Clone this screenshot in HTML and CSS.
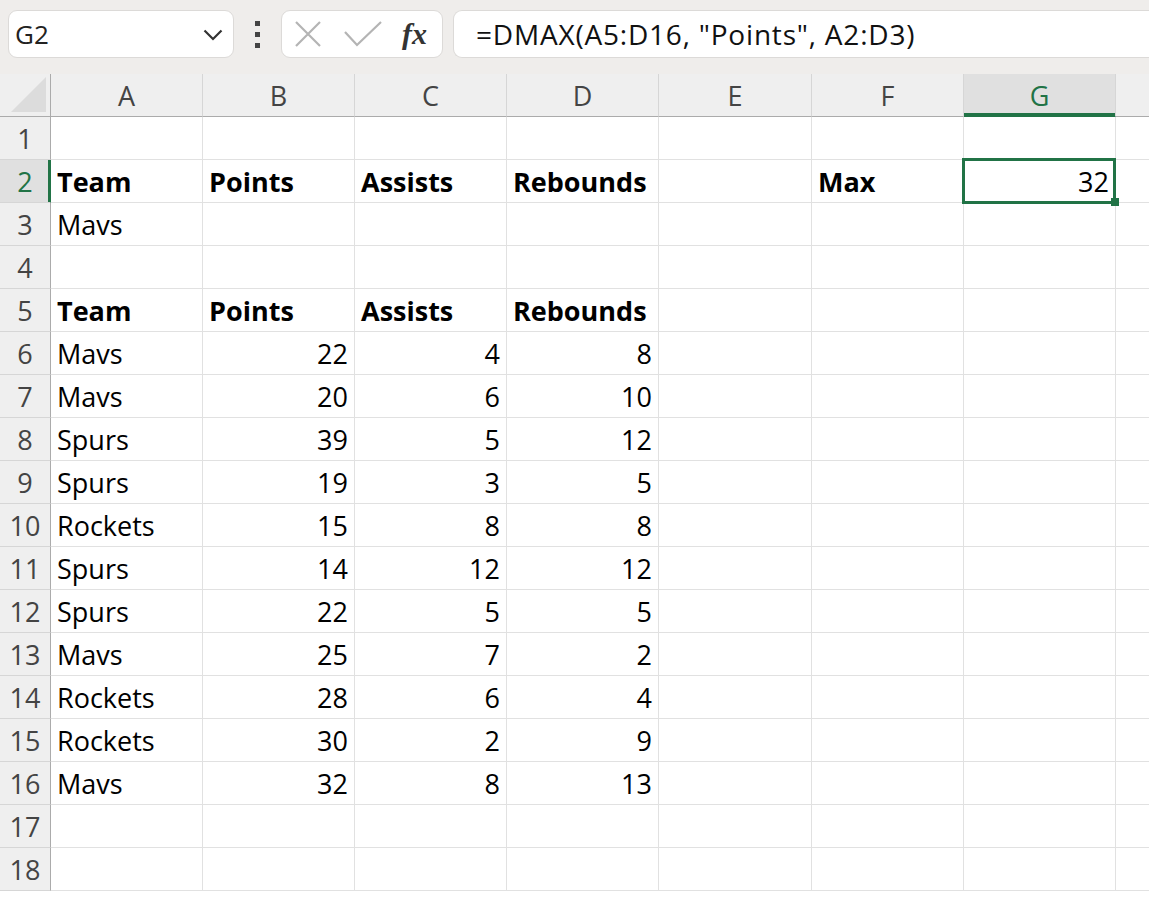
FILE: index.html
```html
<!DOCTYPE html>
<html lang="en">
<head>
  <meta charset="UTF-8" />
  <title>DMAX - Book1</title>
  <link rel="stylesheet" href="styles.css">
</head>
<body>
  <div class="toolbar">
    <div class="namebox">
      <span class="ref">G2</span>
      <svg class="chev" width="20" height="12" viewBox="0 0 20 12"><path d="M1.5 1.5 L10 10 L18.5 1.5" fill="none" stroke="#333" stroke-width="2.2"/></svg>
    </div>
    <div class="dots"><i></i><i></i><i></i></div>
    <div class="fxbox">
      <svg width="28" height="28" viewBox="0 0 28 28"><path d="M2 2 L26 26 M26 2 L2 26" stroke="#b4b4b4" stroke-width="2.2" fill="none"/></svg>
      <svg width="38" height="28" viewBox="0 0 38 28"><path d="M1 12 L13 25 L37 2" stroke="#b4b4b4" stroke-width="2.2" fill="none"/></svg>
      <span class="fx">fx</span>
    </div>
    <div class="formula">=DMAX(A5:D16, "Points", A2:D3)</div>
  </div>

  <table class="sheet">
    <thead>
      <tr>
        <th class="corner"><span class="tri"></span></th>
        <th>A</th><th>B</th><th>C</th><th>D</th><th class="wide">E</th><th>F</th><th class="sel">G</th><th class="rest"></th>
      </tr>
    </thead>
    <tbody>
      <tr><th>1</th><td></td><td></td><td></td><td></td><td></td><td></td><td></td><td></td></tr>
      <tr><th class="sel">2</th><td class="b">Team</td><td class="b">Points</td><td class="b">Assists</td><td class="b">Rebounds</td><td></td><td class="b">Max</td><td class="n active">32<span class="handle"></span></td><td></td></tr>
      <tr><th>3</th><td>Mavs</td><td></td><td></td><td></td><td></td><td></td><td></td><td></td></tr>
      <tr><th>4</th><td></td><td></td><td></td><td></td><td></td><td></td><td></td><td></td></tr>
      <tr><th>5</th><td class="b">Team</td><td class="b">Points</td><td class="b">Assists</td><td class="b">Rebounds</td><td></td><td></td><td></td><td></td></tr>
      <tr><th>6</th><td>Mavs</td><td class="n">22</td><td class="n">4</td><td class="n">8</td><td></td><td></td><td></td><td></td></tr>
      <tr><th>7</th><td>Mavs</td><td class="n">20</td><td class="n">6</td><td class="n">10</td><td></td><td></td><td></td><td></td></tr>
      <tr><th>8</th><td>Spurs</td><td class="n">39</td><td class="n">5</td><td class="n">12</td><td></td><td></td><td></td><td></td></tr>
      <tr><th>9</th><td>Spurs</td><td class="n">19</td><td class="n">3</td><td class="n">5</td><td></td><td></td><td></td><td></td></tr>
      <tr><th>10</th><td>Rockets</td><td class="n">15</td><td class="n">8</td><td class="n">8</td><td></td><td></td><td></td><td></td></tr>
      <tr><th>11</th><td>Spurs</td><td class="n">14</td><td class="n">12</td><td class="n">12</td><td></td><td></td><td></td><td></td></tr>
      <tr><th>12</th><td>Spurs</td><td class="n">22</td><td class="n">5</td><td class="n">5</td><td></td><td></td><td></td><td></td></tr>
      <tr><th>13</th><td>Mavs</td><td class="n">25</td><td class="n">7</td><td class="n">2</td><td></td><td></td><td></td><td></td></tr>
      <tr><th>14</th><td>Rockets</td><td class="n">28</td><td class="n">6</td><td class="n">4</td><td></td><td></td><td></td><td></td></tr>
      <tr><th>15</th><td>Rockets</td><td class="n">30</td><td class="n">2</td><td class="n">9</td><td></td><td></td><td></td><td></td></tr>
      <tr><th>16</th><td>Mavs</td><td class="n">32</td><td class="n">8</td><td class="n">13</td><td></td><td></td><td></td><td></td></tr>
      <tr><th>17</th><td></td><td></td><td></td><td></td><td></td><td></td><td></td><td></td></tr>
      <tr><th>18</th><td></td><td></td><td></td><td></td><td></td><td></td><td></td><td></td></tr>
    </tbody>
  </table>
</body>
</html>
```

FILE: styles.css
```css
* {
  box-sizing: border-box;
  margin: 0;
  padding: 0;
}
html, body {
  height: 100%;
  overflow: hidden;
  background: #fff;
  font-family: "Open Sans", sans-serif;
  color: #000;
}
.toolbar {
  height: 74px;
  background: #efedeb;
  display: flex;
  align-items: flex-start;
  padding: 10px 0 0 8px;
  gap: 10px;
}
.namebox, .fxbox, .formula {
  height: 48px;
  background: #fff;
  border: 1px solid #dcdad8;
  border-radius: 9px;
  display: flex;
  align-items: center;
}
.namebox {
  width: 226px;
  padding: 0 10px 0 6px;
  justify-content: space-between;
}
.ref {
  font-size: 26px;
  color: #222;
  margin-top: -1px;
}
.chev { margin-top: 2px; }
.dots {
  width: 27px;
  height: 48px;
  display: flex;
  flex-direction: column;
  align-items: center;
  justify-content: center;
  gap: 6px;
}
.dots i {
  width: 5px;
  height: 5px;
  background: #444;
}
.fxbox {
  width: 162px;
  padding: 0 10px 0 12px;
  gap: 22px;
}
.fx {
  font-family: "Liberation Serif", serif;
  font-style: italic;
  font-weight: bold;
  font-size: 30px;
  color: #333;
  margin-left: -2px;
}
.formula {
  flex: 1;
  border-right: none;
  border-radius: 9px 0 0 9px;
  padding-left: 22px;
  font-size: 28px;
  letter-spacing: 0.8px;
  color: #111;
  white-space: nowrap;
}
.sheet {
  border-collapse: separate;
  border-spacing: 0;
  table-layout: fixed;
  width: 1200px;
}
.sheet th, .sheet td {
  height: 43px;
  padding: 0;
  white-space: nowrap;
}
.sheet thead th {
  width: 152px;
  background: #efefef;
  border-right: 1px solid #d6d6d6;
  border-bottom: 1px solid #ababab;
  font-weight: normal;
  font-size: 27px;
  color: #444;
  text-align: center;
}
.sheet thead th.wide { width: 153px; }
.sheet thead th.corner {
  width: 51px;
  position: relative;
  border-right: 1px solid #ababab;
}
.tri {
  position: absolute;
  right: 4px;
  bottom: 4px;
  width: 0;
  height: 0;
  border-left: 35px solid transparent;
  border-bottom: 35px solid #dcdcdc;
}
.sheet thead th.sel {
  background: #e0e0e0;
  color: #217346;
  box-shadow: inset 0 -3px 0 #217346;
  border-bottom-color: #217346;
}
.sheet thead th.rest { width: 100px; }
.sheet tbody th {
  background: #efefef;
  border-right: 1px solid #ababab;
  border-bottom: 1px solid #d6d6d6;
  font-weight: normal;
  font-size: 27px;
  color: #444;
  text-align: center;
}
.sheet tbody th.sel {
  background: #e0e0e0;
  color: #217346;
  border-right-color: #217346;
  box-shadow: inset -2px 0 0 #217346;
}
.sheet td {
  border-right: 1px solid #e1e1e1;
  border-bottom: 1px solid #e1e1e1;
  font-size: 27px;
  padding: 0 6px;
}
.sheet td.b { font-weight: bold; }
.sheet td.n { text-align: right; }
.sheet td.active {
  position: relative;
}
.sheet td.active::after {
  content: "";
  position: absolute;
  left: -2px;
  top: -2px;
  right: -1px;
  bottom: -2px;
  border: 3px solid #217346;
}
.handle {
  position: absolute;
  right: -4px;
  bottom: -4px;
  width: 8px;
  height: 8px;
  background: #217346;
  z-index: 1;
}
```
